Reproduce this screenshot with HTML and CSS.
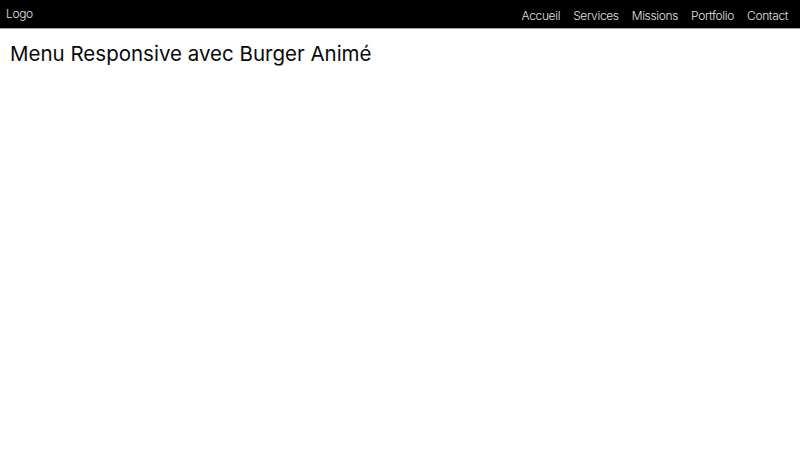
FILE: index.html
```html
<!DOCTYPE html>
<html lang="fr">
<head>
    <meta charset="UTF-8">
    <meta name="viewport" content="width=device-width, initial-scale=1.0">
    <title>Menu Responsive</title>
    <link rel="stylesheet" href="styles.css">
</head>
<body>
    <nav class="navbar">
        <a href="#" class="logo">Logo</a>
        <ul class="nav-links">
            <li><a href="#">Accueil</a></li>
            <li><a href="#">Services</a></li>
            <li><a href="#">Missions</a></li>
            <li><a href="#">Portfolio</a></li>
            <li><a href="#">Contact</a></li>
        </ul>
    </nav>
    <main class="content">
        <h1>Menu Responsive avec Burger Animé</h1>
    </main>
</body>
</html>
```

FILE: styles.css
```css
* {
    margin: 0;
    padding: 0;
    box-sizing: border-box;
}
body {
    font-family: Inter, "Open Sans", sans-serif;
    font-weight: 300;
    background-color: #ffffff;
    color: #000000;
}
.navbar {
    display: flex;
    align-items: center;
    justify-content: space-between;
    height: 29px;
    padding: 0 12px 1px 6px;
    background-color: #000000;
    border-bottom: 1px solid #a0a0a0;
}
.navbar a {
    color: #e2e2e2;
    text-decoration: none;
    font-size: 12px;
    letter-spacing: -0.35px;
}
.nav-links {
    display: flex;
    list-style: none;
    gap: 13px;
}
.content {
    padding: 12px 10px;
}
.content h1 {
    font-size: 20.5px;
    font-weight: 400;
    color: #0a0a0a;
}
```
